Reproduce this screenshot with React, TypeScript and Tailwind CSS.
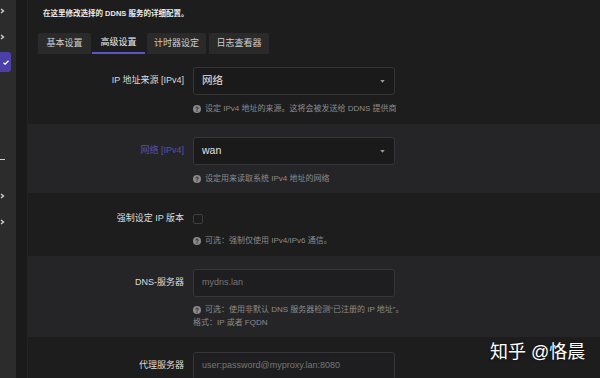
const font = { fontFamily: '"Liberation Sans", "Noto Sans CJK SC", sans-serif' };

function HelpIcon() {
  return (
    <svg width="8" height="8" viewBox="0 0 16 16" className="shrink-0">
      <circle cx="8" cy="8" r="8" fill="#8a8a8a" />
      <path d="M5.8 6.2a2.2 2.2 0 1 1 3.2 2c-.7.4-1 .8-1 1.5" stroke="#1e1e1f" strokeWidth="1.8" fill="none" strokeLinecap="round" />
      <circle cx="8" cy="12.2" r="1.1" fill="#1e1e1f" />
    </svg>
  );
}

function Help({ children }: { children: React.ReactNode }) {
  return (
    <div className="flex items-center gap-[4px] text-[8px] leading-[12px] text-[#8c8c8c]">
      <HelpIcon />
      <span>{children}</span>
    </div>
  );
}

function Caret() {
  return (
    <svg width="5" height="3" viewBox="0 0 6 4" className="mr-[9px]">
      <path d="M0 0h6L3 3.5z" fill="#9a9a9a" />
    </svg>
  );
}

function Select({ value }: { value: string }) {
  return (
    <div className="flex h-[28px] w-[202px] items-center justify-between rounded-[3px] border border-[#363638] bg-[#1a1a1b] pl-[8px] text-[10.5px] text-[#e2e2e2]">
      <span>{value}</span>
      <Caret />
    </div>
  );
}

function TextInput({ placeholder }: { placeholder: string }) {
  return (
    <div className="flex h-[28px] w-[202px] items-center rounded-[3px] border border-[#363638] bg-[#1e1e20] pl-[8px] text-[9px] text-[#767676]">
      {placeholder}
    </div>
  );
}

function Row({
  label,
  labelClass = "text-[#dcdcdc]",
  bg,
  h,
  pt,
  children,
}: {
  label: string;
  labelClass?: string;
  bg: string;
  h: string;
  pt: string;
  children: React.ReactNode;
}) {
  return (
    <div className={`flex shrink-0 ${bg} ${h} ${pt}`}>
      <div className={`flex h-[28px] w-[156px] shrink-0 items-center justify-end text-[9px] ${labelClass}`}>{label}</div>
      <div className="ml-[9px] flex flex-col">{children}</div>
    </div>
  );
}

function SideChevron() {
  return (
    <svg width="6" height="6" viewBox="0 0 6 6">
      <path d="M1 1l2.5 2L1 5" stroke="#cfcfcf" strokeWidth="1.4" fill="none" />
    </svg>
  );
}

export default function App() {
  return (
    <div className="relative flex h-[378px] w-[600px] overflow-hidden bg-[#1c1c1c]" style={font}>
      {/* sidebar */}
      <div className="flex w-[16px] shrink-0 flex-col bg-[#2c2c2d]">
        <div className="mt-[8px] flex h-[6px] items-center"><SideChevron /></div>
        <div className="mt-[20px] flex h-[6px] items-center"><SideChevron /></div>
        <div className="mt-[12px] flex h-[20px] w-[11px] items-center justify-center rounded-r-[3px] bg-[#4c40a8]">
          <svg width="6" height="5" viewBox="0 0 6 5">
            <path d="M0.5 2.8l1.6 1.4L5.5 0.8" stroke="#fff" strokeWidth="1.3" fill="none" />
          </svg>
        </div>
        <div className="mt-[87px] h-[1px] w-[5px] bg-[#cfcfcf]" />
        <div className="mt-[33px] flex h-[6px] items-center"><SideChevron /></div>
        <div className="mt-[20px] flex h-[6px] items-center"><SideChevron /></div>
      </div>
      <div className="w-[12px] shrink-0 border-r border-[#232323] bg-[#1a1a1a]" />

      {/* main */}
      <div className="flex flex-1 flex-col bg-[#1d1d1e]">
        <div className="shrink-0 pl-[15px] pt-[8px] text-[7.5px] font-semibold leading-[12px] text-[#ececec]">
          在这里修改选择的 DDNS 服务的详细配置。
        </div>
        <div className="ml-[10px] mt-[13px] flex h-[21px] shrink-0 gap-[1px] text-[9px]">
          <div className="flex w-[53px] items-center justify-center rounded-t-[2px] bg-[#2a2a2b] text-[#cfcfcf]">基本设置</div>
          <div className="flex w-[53px] items-center justify-center border-b-[2px] border-[#5b55c9] text-[#f0f0f0]">高级设置</div>
          <div className="ml-[1px] flex w-[59px] items-center justify-center rounded-t-[2px] bg-[#2a2a2b] text-[#cfcfcf]">计时器设定</div>
          <div className="ml-[2px] flex w-[60px] items-center justify-center rounded-t-[2px] bg-[#2a2a2b] text-[#cfcfcf]">日志查看器</div>
        </div>

        <Row label="IP 地址来源 [IPv4]" bg="bg-[#1d1d1e]" h="h-[70px]" pt="pt-[13px]">
          <Select value="网络" />
          <div className="mt-[8px]">
            <Help>设定 IPv4 地址的来源。这将会被发送给 DDNS 提供商</Help>
          </div>
        </Row>

        <Row label="网络 [IPv4]" labelClass="text-[#5a4fb0]" bg="bg-[#252527]" h="h-[69px]" pt="pt-[13px]">
          <Select value="wan" />
          <div className="mt-[8px]">
            <Help>设定用来读取系统 IPv4 地址的网络</Help>
          </div>
        </Row>

        <Row label="强制设定 IP 版本" bg="bg-[#1d1d1e]" h="h-[63px]" pt="pt-[12px]">
          <div className="flex h-[28px] items-center">
            <div className="h-[10px] w-[10px] rounded-[2px] border border-[#3e3e40] bg-[#1d1d1e]" />
          </div>
          <div className="mt-[2px]">
            <Help>可选：强制仅使用 IPv4/IPv6 通信。</Help>
          </div>
        </Row>

        <Row label="DNS-服务器" bg="bg-[#252527]" h="h-[81px]" pt="pt-[13px]">
          <TextInput placeholder="mydns.lan" />
          <div className="mt-[7px]">
            <Help>可选：使用非默认 DNS 服务器检测“已注册的 IP 地址”。</Help>
            <div className="text-[8px] leading-[14px] text-[#8c8c8c]">格式：IP 或者 FQDN</div>
          </div>
        </Row>

        <Row label="代理服务器" bg="bg-[#1d1d1e]" h="h-[60px]" pt="pt-[15px]">
          <TextInput placeholder="user:password@myproxy.lan:8080" />
        </Row>
      </div>

      <div className="absolute left-[490px] top-[340px] text-[18px] leading-[24px] text-white [text-shadow:0_0_3px_rgba(0,0,0,0.6)]">
        知乎 @恪晨
      </div>
    </div>
  );
}
